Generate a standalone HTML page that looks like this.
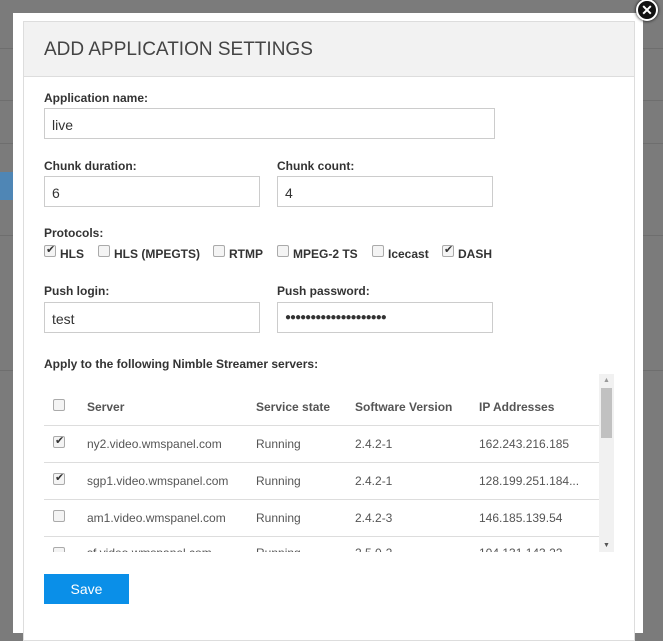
<!DOCTYPE html>
<html><head><style>
*{box-sizing:border-box;margin:0;padding:0}
body{width:663px;height:622px;overflow:hidden;background:#7b7b7b;font-family:"Liberation Sans",sans-serif;position:relative}
.bgl{position:absolute;left:0;height:1px;background:#6e6e6e;width:663px}
.modal{position:absolute;left:13px;top:13px;width:630px;height:620px;background:#fff}
.panel{position:absolute;left:23px;top:21px;width:612px;height:620px;border:1px solid #ddd;background:#fff}
.hdr{position:absolute;left:0;top:0;right:0;height:55px;background:#f2f2f2;border-bottom:1px solid #ddd}
.hdr h1{position:absolute;left:20px;top:17px;font-size:19px;font-weight:normal;color:#444}
.lbl{position:absolute;font-size:12px;font-weight:bold;color:#333}
.inp{position:absolute;border:1px solid #ccc;height:31px;font-size:14px;color:#333;padding:8px 7px}
.cb{position:absolute;width:12px;height:12px;border:1px solid #aaa;border-radius:2px;background:#f4f4f4}
.cb.on::after{content:"✔";position:absolute;left:1px;top:-3px;font-size:11px;color:#333}
.pt{position:absolute;font-size:12px;font-weight:bold;color:#333;top:247px}
.th{position:absolute;font-size:12px;font-weight:bold;color:#555}
.td{position:absolute;font-size:12px;color:#555}
.hl{position:absolute;left:44px;width:555px;height:1px;background:#ddd}
</style></head><body>
<div class="bgl" style="top:48px"></div><div class="bgl" style="top:100px"></div><div class="bgl" style="top:143px"></div><div class="bgl" style="top:235px"></div><div class="bgl" style="top:370px"></div>
<div style="position:absolute;left:0;top:172px;width:13px;height:28px;background:#4f86b5"></div>
<div class="modal"></div>
<div class="panel"><div class="hdr"><h1>ADD APPLICATION SETTINGS</h1></div></div>
<div class="lbl" style="left:44px;top:91px">Application name:</div>
<div class="inp" style="left:44px;top:108px;width:451px">live</div>
<div class="lbl" style="left:44px;top:159px">Chunk duration:</div>
<div class="lbl" style="left:277px;top:159px">Chunk count:</div>
<div class="inp" style="left:44px;top:176px;width:216px">6</div>
<div class="inp" style="left:277px;top:176px;width:216px">4</div>
<div class="lbl" style="left:44px;top:226px">Protocols:</div>
<div class="cb on" style="left:44px;top:245px"></div><div class="pt" style="left:60px">HLS</div>
<div class="cb" style="left:98px;top:245px"></div><div class="pt" style="left:114px">HLS (MPEGTS)</div>
<div class="cb" style="left:213px;top:245px"></div><div class="pt" style="left:229px">RTMP</div>
<div class="cb" style="left:277px;top:245px"></div><div class="pt" style="left:293px">MPEG-2 TS</div>
<div class="cb" style="left:372px;top:245px"></div><div class="pt" style="left:388px">Icecast</div>
<div class="cb on" style="left:442px;top:245px"></div><div class="pt" style="left:458px">DASH</div>
<div class="lbl" style="left:44px;top:284px">Push login:</div>
<div class="lbl" style="left:277px;top:284px">Push password:</div>
<div class="inp" style="left:44px;top:302px;width:216px">test</div>
<div class="inp" style="left:277px;top:302px;width:216px;font-size:10px;padding-top:9px;letter-spacing:-1px">●●●●●●●●●●●●●●●●●●●●</div>
<div class="lbl" style="left:44px;top:357px">Apply to the following Nimble Streamer servers:</div>
<div style="position:absolute;left:44px;top:374px;width:570px;height:178px;overflow:hidden">
</div>
<div style="position:absolute;left:599px;top:374px;width:15px;height:178px;background:#f1f1f1"></div>
<div style="position:absolute;left:601px;top:388px;width:11px;height:50px;background:#c1c1c1"></div>
<div style="position:absolute;left:603px;top:377px;font-size:7px;color:#999">▲</div>
<div style="position:absolute;left:603px;top:542px;font-size:7px;color:#555">▼</div>
<div class="cb" style="left:53px;top:399px"></div>
<div class="th" style="left:87px;top:400px">Server</div><div class="th" style="left:256px;top:400px">Service state</div><div class="th" style="left:355px;top:400px">Software Version</div><div class="th" style="left:479px;top:400px">IP Addresses</div>
<div class="hl" style="top:425px"></div><div class="hl" style="top:462px"></div><div class="hl" style="top:499px"></div><div class="hl" style="top:536px"></div>
<div class="cb on" style="left:53px;top:436px"></div><div class="td" style="left:87px;top:437px">ny2.video.wmspanel.com</div><div class="td" style="left:256px;top:437px">Running</div><div class="td" style="left:355px;top:437px">2.4.2-1</div><div class="td" style="left:479px;top:437px">162.243.216.185</div>
<div class="cb on" style="left:53px;top:473px"></div><div class="td" style="left:87px;top:474px">sgp1.video.wmspanel.com</div><div class="td" style="left:256px;top:474px">Running</div><div class="td" style="left:355px;top:474px">2.4.2-1</div><div class="td" style="left:479px;top:474px">128.199.251.184...</div>
<div class="cb" style="left:53px;top:510px"></div><div class="td" style="left:87px;top:511px">am1.video.wmspanel.com</div><div class="td" style="left:256px;top:511px">Running</div><div class="td" style="left:355px;top:511px">2.4.2-3</div><div class="td" style="left:479px;top:511px">146.185.139.54</div>
<div style="position:absolute;left:44px;top:545px;width:555px;height:7px;overflow:hidden">
<div class="cb" style="left:9px;top:2px"></div><div class="td" style="left:43px;top:1px">sf.video.wmspanel.com</div><div class="td" style="left:212px;top:1px">Running</div><div class="td" style="left:311px;top:1px">2.5.0-2</div><div class="td" style="left:435px;top:1px">104.131.143.22</div></div>
<div style="position:absolute;left:44px;top:574px;width:85px;height:30px;background:#0a8fe8;color:#fff;font-size:14px;text-align:center;line-height:30px">Save</div>
<div style="position:absolute;left:636px;top:-1px;width:22px;height:22px;border-radius:50%;background:#111;border:2px solid #fff;box-shadow:0 0 3px #000;color:#fff;font-size:14px;font-weight:bold;text-align:center;line-height:18px">✕</div>
</body></html>
